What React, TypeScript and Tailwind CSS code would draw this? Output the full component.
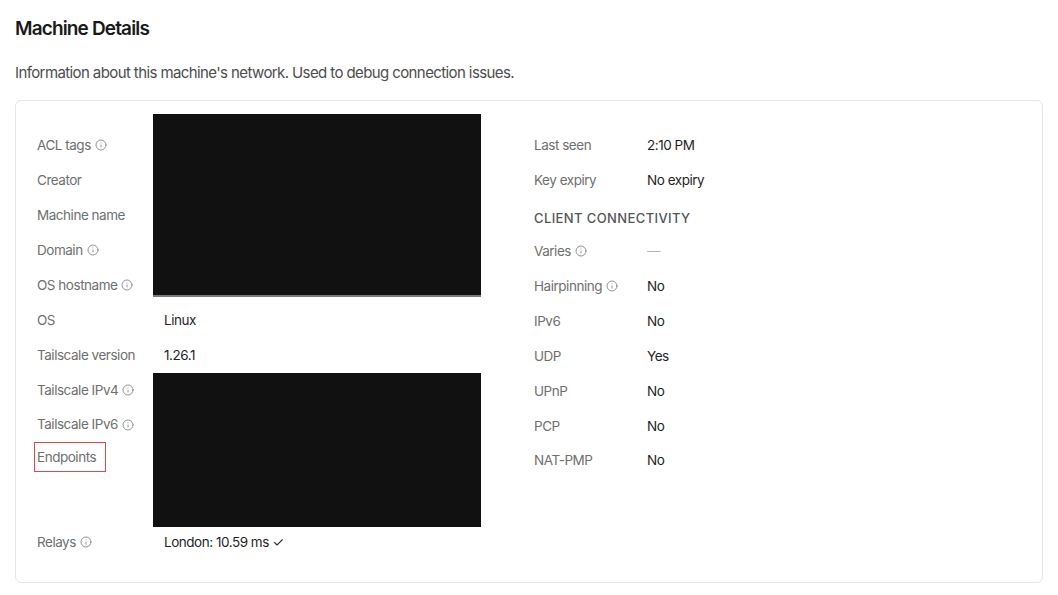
import { Info } from "lucide-react";

type Row = {
  label: string;
  hint?: boolean;
  value?: string;
  muted?: boolean;
};

const leftRows: Row[] = [
  { label: "ACL tags", hint: true },
  { label: "Creator" },
  { label: "Machine name" },
  { label: "Domain", hint: true },
  { label: "OS hostname", hint: true },
  { label: "OS", value: "Linux" },
  { label: "Tailscale version", value: "1.26.1" },
  { label: "Tailscale IPv4", hint: true },
  { label: "Tailscale IPv6", hint: true },
];

const connectivity: Row[] = [
  { label: "Varies", hint: true, value: "—", muted: true },
  { label: "Hairpinning", hint: true, value: "No" },
  { label: "IPv6", value: "No" },
  { label: "UDP", value: "Yes" },
  { label: "UPnP", value: "No" },
  { label: "PCP", value: "No" },
  { label: "NAT-PMP", value: "No" },
];

function Label({ text, hint }: { text: string; hint?: boolean }) {
  return (
    <span className="flex items-center gap-[4px] text-[#6f6f6f]">
      {text}
      {hint && <Info className="h-[12px] w-[12px] text-[#7a7a7a]" strokeWidth={1.6} />}
    </span>
  );
}

function DetailRow({ row, labelWidth }: { row: Row; labelWidth: string }) {
  return (
    <div className="flex h-[34.9px] items-center">
      <div className={labelWidth}>
        <Label text={row.label} hint={row.hint} />
      </div>
      <div className={row.muted ? "text-[#b5b5b5]" : "text-[#1f1f1f]"}>{row.value}</div>
    </div>
  );
}

export default function App() {
  return (
    <div className="min-h-screen bg-white px-[15px] pt-[15px] font-['Inter',sans-serif]">
      <h2 className="text-[19px] font-semibold leading-[28px] tracking-[-0.045em] text-[#1a1a1a]">
        Machine Details
      </h2>
      <p className="mt-[19px] text-[15px] leading-[22px] tracking-[-0.04em] text-[#4d4d4d]">
        Information about this machine's network. Used to debug connection issues.
      </p>

      <div className="relative mt-[16px] rounded-[6px] border border-[#e6e6e6] px-[21px] pb-[22px] pt-[27px] text-[13.5px] tracking-[-0.035em]">
        <div className="grid grid-cols-2 gap-x-[10px]">
          <div>
            {leftRows.map((row) => (
              <DetailRow key={row.label} row={row} labelWidth="w-[127px]" />
            ))}
            <div className="h-[83px]">
              <span className="-ml-[3px] inline-flex h-[30px] w-[72px] items-center border border-[#e0474c] px-[2px] text-[#6f6f6f]">
                Endpoints
              </span>
            </div>
            <div className="flex h-[34.9px] items-center">
              <div className="w-[127px]">
                <Label text="Relays" hint />
              </div>
              <div className="text-[#1f1f1f]">London: 10.59 ms ✓</div>
            </div>
          </div>

          <div>
            <DetailRow row={{ label: "Last seen", value: "2:10 PM" }} labelWidth="w-[113px]" />
            <DetailRow row={{ label: "Key expiry", value: "No expiry" }} labelWidth="w-[113px]" />
            <div className="flex h-[36px] items-end pb-[5px] text-[13px] font-medium tracking-[0.03em] text-[#555]">
              CLIENT CONNECTIVITY
            </div>
            {connectivity.map((row) => (
              <DetailRow key={row.label} row={row} labelWidth="w-[113px]" />
            ))}
          </div>
        </div>

        {/* redacted values */}
        <div className="absolute left-[137px] top-[13px] h-[183px] w-[328px] border-b-[2px] border-[#7a7a7a] bg-[#111]" />
        <div className="absolute left-[137px] top-[272px] h-[154px] w-[328px] bg-[#111]" />
      </div>
    </div>
  );
}
